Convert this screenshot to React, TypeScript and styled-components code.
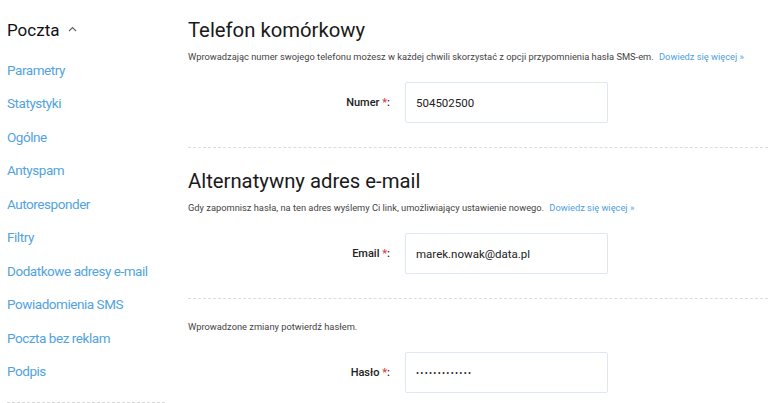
import styled, {createGlobalStyle} from 'styled-components';

const GlobalStyle = createGlobalStyle`
  body {
    margin: 0;
    background: #fff;
    font-family: Roboto, 'Liberation Sans', Arial, sans-serif;
    color: #222;
  }
`;

const menu = [
  'Parametry',
  'Statystyki',
  'Ogólne',
  'Antyspam',
  'Autoresponder',
  'Filtry',
  'Dodatkowe adresy e-mail',
  'Powiadomienia SMS',
  'Poczta bez reklam',
  'Podpis',
];

function App() {
  return (
    <Page>
      <GlobalStyle />
      <Sidebar>
        <SideTitle>
          Poczta
          <svg width="9" height="6" viewBox="0 0 9 6">
            <path d="M1 5 L4.5 1.5 L8 5" fill="none" stroke="#666" strokeWidth="1.2" />
          </svg>
        </SideTitle>
        <Menu>
          {menu.map((item) => (
            <MenuItem key={item} href="#">
              {item}
            </MenuItem>
          ))}
        </Menu>
      </Sidebar>
      <Main>
        <Section top={18}>
          <Heading>Telefon komórkowy</Heading>
          <Note>
            Wprowadzając numer swojego telefonu możesz w każdej chwili skorzystać z opcji
            przypomnienia hasła SMS-em. <NoteLink href="#">Dowiedz się więcej »</NoteLink>
          </Note>
          <FormRow>
            <Label>
              Numer <Star>*</Star>:
            </Label>
            <Field defaultValue="504502500" />
          </FormRow>
        </Section>
        <Section top={21}>
          <Heading>Alternatywny adres e-mail</Heading>
          <Note>
            Gdy zapomnisz hasła, na ten adres wyślemy Ci link, umożliwiający ustawienie
            nowego. <NoteLink href="#">Dowiedz się więcej »</NoteLink>
          </Note>
          <FormRow>
            <Label>
              Email <Star>*</Star>:
            </Label>
            <Field defaultValue="marek.nowak@data.pl" />
          </FormRow>
        </Section>
        <Section top={22} last>
          <Note>Wprowadzone zmiany potwierdź hasłem.</Note>
          <FormRow>
            <Label>
              Hasło <Star>*</Star>:
            </Label>
            <Field type="password" defaultValue="supertajne123" />
          </FormRow>
        </Section>
      </Main>
    </Page>
  );
}

const Page = styled.div`
  display: flex;
  align-items: flex-start;
  gap: 23px;
  padding-left: 7px;
  height: 403px;
  overflow: hidden;
`;

const Sidebar = styled.div`
  width: 158px;
  flex-shrink: 0;
  padding-top: 19px;
  border-bottom: 1px dashed #d8d8d8;
  height: 383px;
`;

const SideTitle = styled.div`
  display: flex;
  align-items: center;
  gap: 9px;
  font-size: 17px;
  line-height: 22px;
  color: #111;
  svg {
    margin-top: -3px;
  }
`;

const Menu = styled.div`
  display: flex;
  flex-direction: column;
  margin-top: 13px;
`;

const MenuItem = styled.a`
  display: block;
  font-size: 13.5px;
  line-height: 33.45px;
  letter-spacing: -0.45px;
  color: #52a3e0;
  text-decoration: none;
`;

const Main = styled.div`
  flex: 1;
  display: flex;
  flex-direction: column;
`;

const Section = styled.div<{top: number; last?: boolean}>`
  padding: ${(p) => `${p.top}px 0 ${p.last ? 0 : 24}px`};
  border-bottom: ${(p) => (p.last ? 'none' : '1px dashed #dcdcdc')};
`;

const Heading = styled.h2`
  margin: 0 0 9px;
  font-size: 20.3px;
  font-weight: 400;
  line-height: 24px;
  color: #1a1a1a;
`;

const Note = styled.p`
  margin: 0;
  font-size: 9.3px;
  line-height: 12px;
  color: #444;
`;

const NoteLink = styled.a`
  margin-left: 3px;
  color: #4c9fdf;
  text-decoration: none;
`;

const FormRow = styled.div`
  display: flex;
  align-items: center;
  margin-top: 19px;
`;

const Label = styled.label`
  width: 202px;
  padding-right: 15px;
  text-align: right;
  font-size: 11px;
  font-weight: 500;
  color: #222;
`;

const Star = styled.span`
  color: #e53845;
`;

const Field = styled.input`
  box-sizing: border-box;
  width: 203px;
  height: 41px;
  padding: 0 10px;
  border: 1px solid #dfe7f3;
  border-radius: 2px;
  font-family: Roboto, 'Liberation Sans', Arial, sans-serif;
  font-size: 11.5px;
  color: #222;
  outline: none;
  &[type='password'] {
    font-size: 9px;
    letter-spacing: 1.3px;
  }
`;

export default App;
